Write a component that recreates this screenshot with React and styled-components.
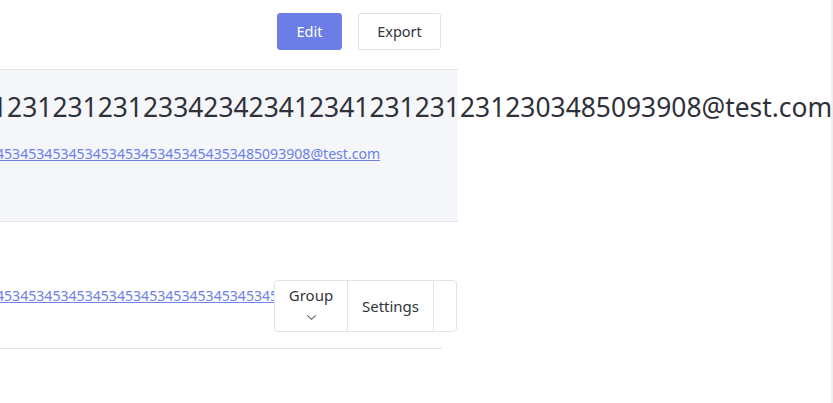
import React from "react";
import styled, { createGlobalStyle } from "styled-components";

const GlobalStyle = createGlobalStyle`
  html, body { margin: 0; padding: 0; background: #fff; overflow: hidden; }
  body { font-family: "Noto Sans", "Open Sans", sans-serif; color: #2f313a; }
  * { box-sizing: border-box; }
`;

const Page = styled.div`
  width: 833px;
  height: 403px;
  overflow: hidden;
  border-right: 2px solid #efefef;
  background: #fff;
`;

const Toolbar = styled.div`
  width: 458px;
  height: 69px;
  display: flex;
  justify-content: flex-end;
  align-items: flex-start;
  gap: 16px;
  padding: 13px 17px 0 0;
`;

const Button = styled.button`
  height: 37px;
  width: ${(p) => p.$w}px;
  border-radius: 3px;
  font-family: inherit;
  font-size: 14.5px;
  line-height: 1;
  cursor: pointer;
  border: 1px solid ${(p) => (p.$primary ? "#6a7ee5" : "#dde1e7")};
  background: ${(p) => (p.$primary ? "#6a7ee5" : "#fff")};
  color: ${(p) => (p.$primary ? "#fff" : "#33353c")};
`;

const Panel = styled.section`
  width: 458px;
  height: 153px;
  background: #f5f6fa;
  border-top: 1px solid #e2e6eb;
  border-bottom: 1px solid #e2e6eb;
  padding-top: 21px;
`;

const BigText = styled.div`
  font-size: 26.4px;
  line-height: 32px;
  white-space: nowrap;
  margin-left: ${(p) => p.$shift}px;
  color: #2f313a;
`;

const Link = styled.a`
  display: block;
  font-size: 14.1px;
  line-height: 20px;
  white-space: nowrap;
  color: #6b81e6;
  text-decoration: underline;
  margin-left: ${(p) => p.$shift}px;
`;

const PanelLink = styled(Link)`
  margin-top: 21px;
`;

const Row = styled.div`
  width: 442px;
  height: 127px;
  display: flex;
  align-items: flex-start;
  padding-top: 58px;
  border-bottom: 1px solid #e2e6eb;
`;

const RowLinkBox = styled.div`
  flex: 0 0 274px;
  overflow: hidden;
  padding-top: 6px;
`;

const ButtonGroup = styled.div`
  flex: 0 0 183px;
  height: 52px;
  display: flex;
  border: 1px solid #dfe4ea;
  border-radius: 4px;
  background: #fff;
`;

const Cell = styled.div`
  width: ${(p) => p.$w}px;
  flex: none;
  display: flex;
  flex-direction: column;
  align-items: center;
  justify-content: center;
  font-size: 15px;
  line-height: 20px;
  color: #33353c;
  & + & { border-left: 1px solid #dfe4ea; }
`;

const Chevron = styled.svg`
  display: block;
  margin-top: 10px;
  margin-bottom: 7px;
  width: 9px;
  height: 5px;
`;

export default function App() {
  return (
    <>
      <GlobalStyle />
      <Page>
        <Toolbar>
          <Button $primary $w={65}>Edit</Button>
          <Button $w={83}>Export</Button>
        </Toolbar>
        <Panel>
          <BigText $shift={-8}>12312312312334234234123412312312312303485093908@test.com</BigText>
          <PanelLink $shift={-4} href="#">453453453453453453453453454353485093908@test.com</PanelLink>
        </Panel>
        <Row>
          <RowLinkBox>
            <Link $shift={-4} href="#">4534534534534534534534534534534534543534534534535093908@test.com</Link>
          </RowLinkBox>
          <ButtonGroup>
            <Cell $w={72}>
              <span>Group</span>
              <Chevron viewBox="0 0 9 5">
                <path d="M0.6 0.6 L4.5 4.3 L8.4 0.6" fill="none" stroke="#666" strokeWidth="1.1" strokeLinecap="round" strokeLinejoin="round" />
              </Chevron>
            </Cell>
            <Cell $w={86}>Settings</Cell>
            <Cell $w={23} />
          </ButtonGroup>
        </Row>
      </Page>
    </>
  );
}
